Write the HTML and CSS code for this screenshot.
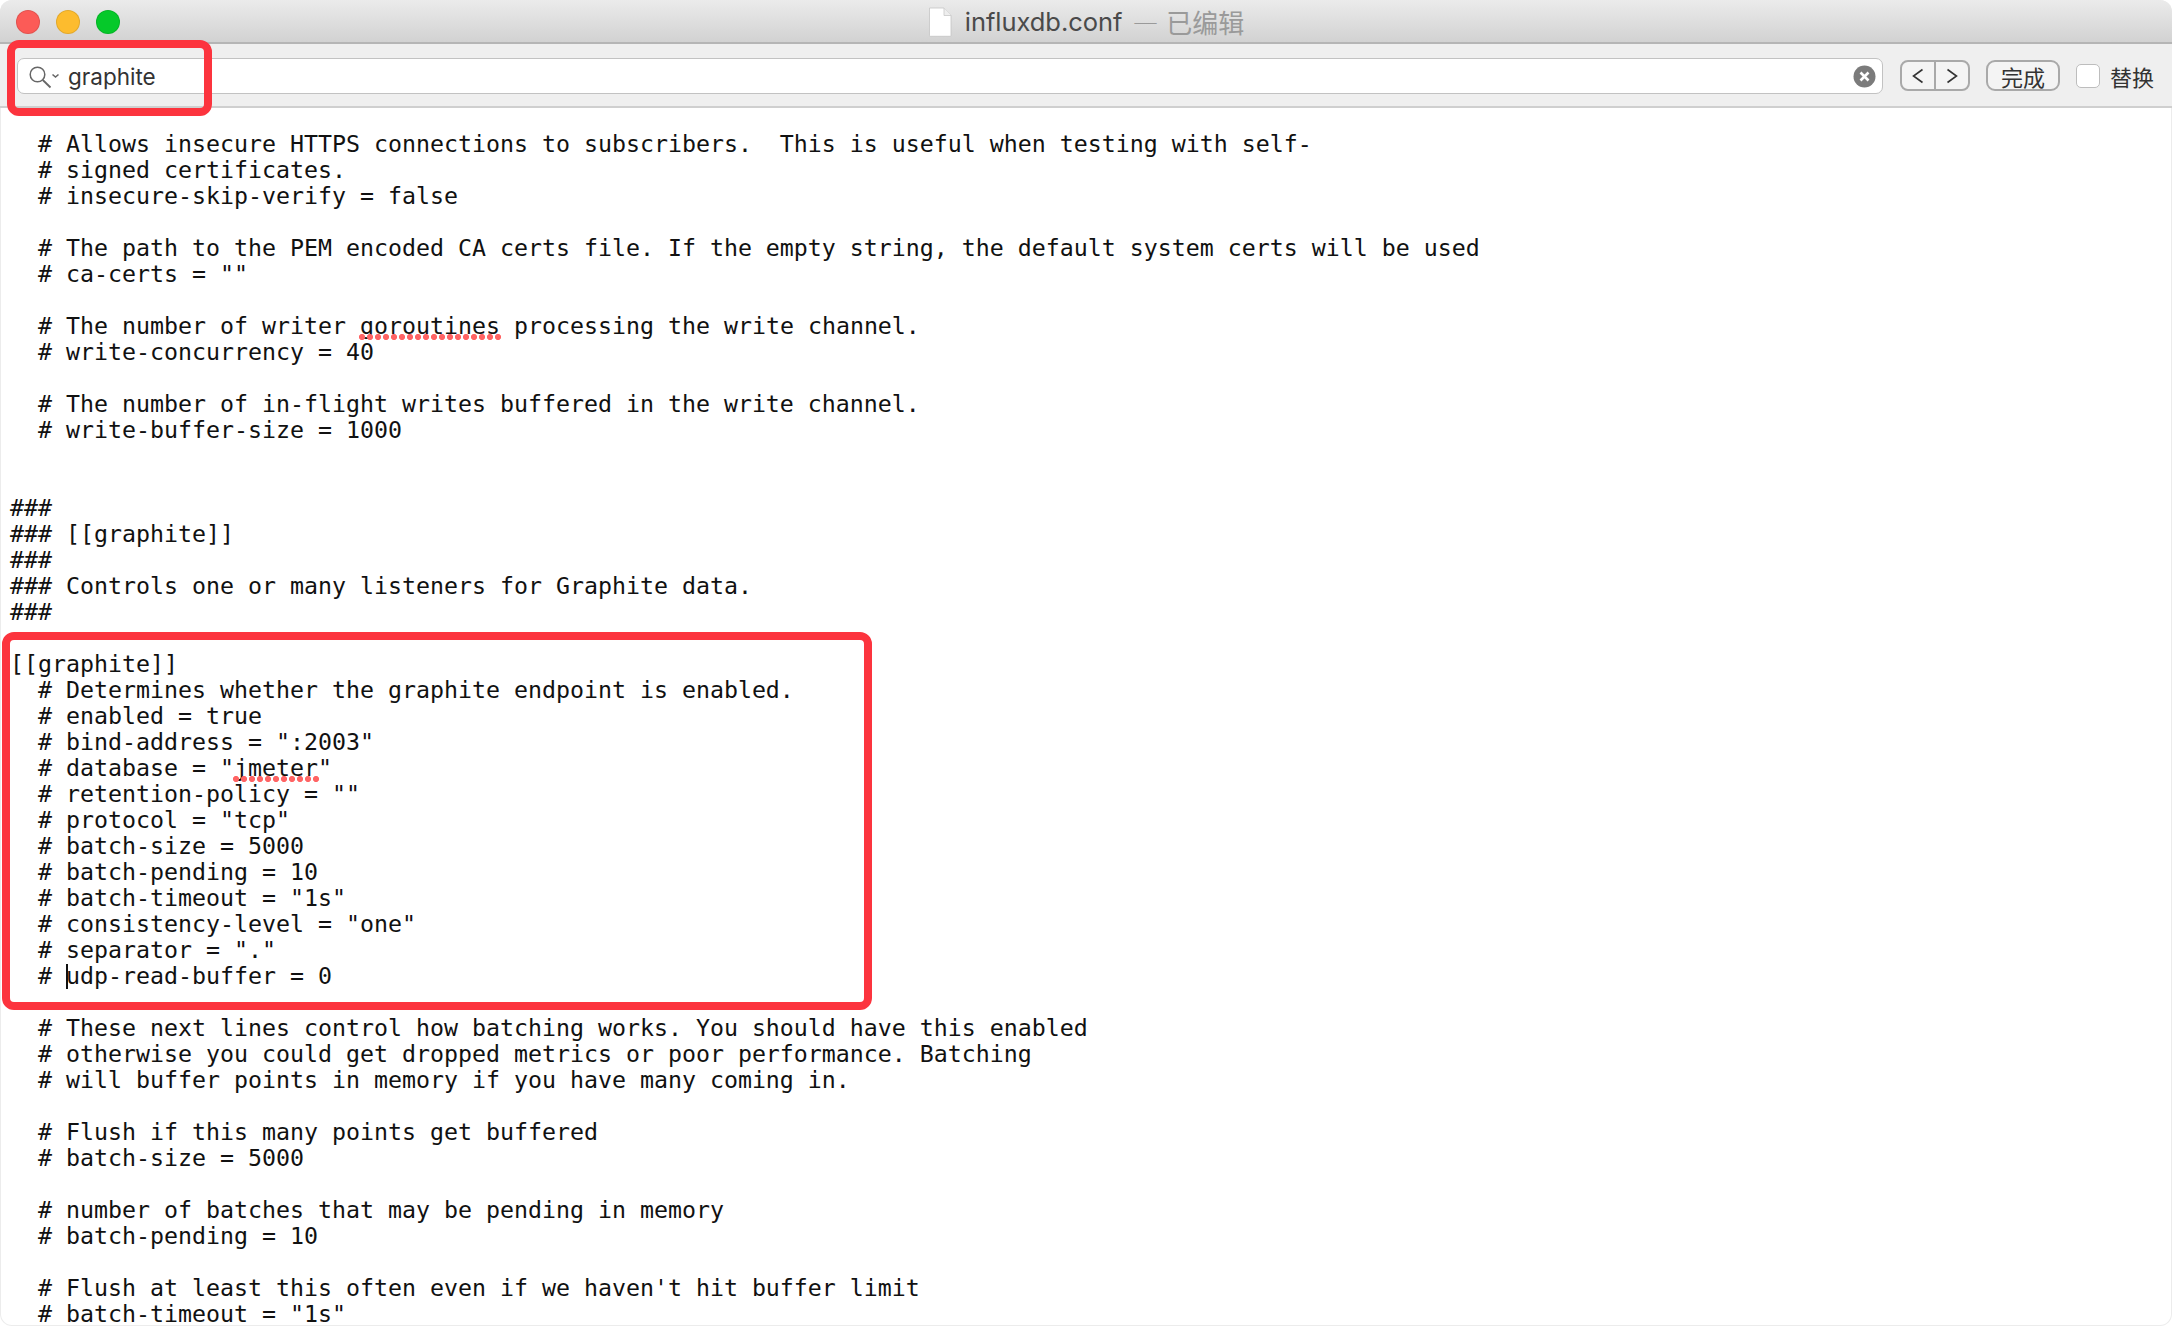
FILE: index.html
```html
<!DOCTYPE html>
<html lang="zh">
<head>
<meta charset="utf-8">
<title>influxdb.conf</title>
<link rel="stylesheet" href="styles.css">
</head>
<body>
<div class="window">
  <header class="titlebar">
    <div class="lights">
      <span class="light red"></span>
      <span class="light yellow"></span>
      <span class="light green"></span>
    </div>
    <div class="title">
      <svg class="doc" width="24" height="30" viewBox="0 0 24 30">
        <path d="M1.5 1H16L23 8.5V28.5a.8.8 0 0 1-.8.8H2.3a.8.8 0 0 1-.8-.8Z" fill="#fff" stroke="#c4c4c4" stroke-width=".8"/>
        <path d="M16 1V8.5H23" fill="#eee" stroke="#c8c8c8" stroke-width=".8"/>
      </svg>
      <span class="name">influxdb.conf</span>
      <span class="edited">— 已编辑</span>
    </div>
    <div></div>
  </header>
  <div class="findbar">
    <div class="search">
      <svg class="mag" width="32" height="26" viewBox="0 0 32 26">
        <circle cx="8.5" cy="11.5" r="7.3" fill="none" stroke="#666" stroke-width="1.5"/>
        <path d="M13.8 17L21.5 24.5" stroke="#666" stroke-width="1.8" fill="none"/>
        <path d="M23.5 11.5L26.5 14L29.5 11.5" stroke="#666" stroke-width="1.6" fill="none"/>
      </svg>
      <span class="query">graphite</span>
      <svg class="clear" width="23" height="23" viewBox="0 0 23 23">
        <circle cx="11.5" cy="11.5" r="11" fill="#7b7b7b"/>
        <path d="M7.5 7.5L15.5 15.5M15.5 7.5L7.5 15.5" stroke="#fff" stroke-width="2.6" fill="none"/>
      </svg>
    </div>
    <div class="stepper">
      <span class="step">
        <svg width="14" height="16" viewBox="0 0 14 16"><path d="M11.5 1.5L2.5 8L11.5 14.5" fill="none" stroke="#333" stroke-width="1.6"/></svg>
      </span>
      <span class="step">
        <svg width="14" height="16" viewBox="0 0 14 16"><path d="M2.5 1.5L11.5 8L2.5 14.5" fill="none" stroke="#333" stroke-width="1.6"/></svg>
      </span>
    </div>
    <div class="done">完成</div>
    <div class="check"></div>
    <div class="replace">替换</div>
  </div>
  <main class="editor">
<pre class="code">  # Allows insecure HTTPS connections to subscribers.  This is useful when testing with self-
  # signed certificates.
  # insecure-skip-verify = false

  # The path to the PEM encoded CA certs file. If the empty string, the default system certs will be used
  # ca-certs = ""

  # The number of writer <span class="misspelt">goroutines</span> processing the write channel.
  # write-concurrency = 40

  # The number of in-flight writes buffered in the write channel.
  # write-buffer-size = 1000


###
### [[graphite]]
###
### Controls one or many listeners for Graphite data.
###

[[graphite]]
  # Determines whether the graphite endpoint is enabled.
  # enabled = true
  # bind-address = ":2003"
  # database = "<span class="misspelt">jmeter</span>"
  # retention-policy = ""
  # protocol = "tcp"
  # batch-size = 5000
  # batch-pending = 10
  # batch-timeout = "1s"
  # consistency-level = "one"
  # separator = "."
  # <span class="caret"></span>udp-read-buffer = 0

  # These next lines control how batching works. You should have this enabled
  # otherwise you could get dropped metrics or poor performance. Batching
  # will buffer points in memory if you have many coming in.

  # Flush if this many points get buffered
  # batch-size = 5000

  # number of batches that may be pending in memory
  # batch-pending = 10

  # Flush at least this often even if we haven't hit buffer limit
  # batch-timeout = "1s"</pre>
  </main>
</div>
<div class="mark mark-search"></div>
<div class="mark mark-section"></div>
</body>
</html>
```
FILE: styles.css
```css
* { box-sizing: border-box; }
html, body { margin: 0; height: 100%; background: #fff; overflow: hidden; }
body { position: relative; }

.window {
  height: 1326px;
  display: flex;
  flex-direction: column;
  border-radius: 12px;
  overflow: hidden;
  background: #fff;
  box-shadow: inset 0 0 0 1px #ececec;
}

.titlebar {
  height: 44px;
  flex: none;
  display: grid;
  grid-template-columns: 1fr auto 1fr;
  align-items: center;
  background: linear-gradient(#ebebeb, #d2d2d2);
  border-bottom: 2px solid #b5b5b5;
}
.lights { display: flex; gap: 16px; padding-left: 16px; margin-top: 1px; }
.light { width: 24px; height: 24px; border-radius: 50%; border: 1px solid rgba(0,0,0,.1); }
.red { background: #fc5b57; }
.yellow { background: #fdbc2e; }
.green { background: #05c92a; }

.title {
  display: flex;
  align-items: center;
  font-family: Inter, "Noto Sans CJK SC", sans-serif;
  font-size: 25.5px;
  line-height: 30px;
  margin-top: 2px;
}
.doc { margin-right: 13px; }
.name { color: #4a4a4a; letter-spacing: -.05px; }
.edited { color: #9a9a9a; margin-left: 10px; font-family: "Noto Sans CJK SC", sans-serif; font-size: 26px; word-spacing: 2px; }

.findbar {
  height: 64px;
  flex: none;
  display: flex;
  align-items: center;
  padding: 2px 17px 0;
  background: #efefef;
  border-bottom: 2px solid #cfcfcf;
}
.search {
  width: 1866px;
  height: 36px;
  display: flex;
  align-items: center;
  padding: 0 6px 0 11px;
  background: #fff;
  border: 1px solid #c2c2c2;
  border-radius: 7px;
}
.mag { flex: none; }
.query {
  flex: 1;
  margin-left: 7px;
  font-family: Inter, "Liberation Sans", sans-serif;
  font-size: 22.5px;
  color: #333;
}
.clear { flex: none; }

.stepper {
  margin-left: 17px;
  width: 70px;
  height: 31px;
  margin-top: -1px;
  display: flex;
  border: 2px solid #a9a9a9;
  border-radius: 8px;
  background: #f4f4f4;
}
.step { flex: 1; display: flex; align-items: center; justify-content: center; }
.step + .step { border-left: 2px solid #a9a9a9; }

.done {
  margin-left: 16px;
  margin-top: -1px;
  width: 74px;
  height: 31px;
  border: 2px solid #a9a9a9;
  border-radius: 9px;
  background: #f4f4f4;
  display: flex;
  align-items: center;
  justify-content: center;
  font-family: "Noto Sans CJK SC", sans-serif;
  font-size: 22px;
  color: #333;
}
.check {
  margin-left: 16px;
  width: 24px;
  height: 24px;
  background: #fff;
  border: 1px solid #bdbdbd;
  border-radius: 5px;
}
.replace {
  margin-left: 10px;
  font-family: "Noto Sans CJK SC", sans-serif;
  font-size: 22px;
  color: #333;
}

.editor { flex: 1; padding: 23px 0 0 10px; overflow: hidden; }
.code {
  margin: 0;
  font-family: "DejaVu Sans Mono", monospace;
  font-size: 23.25px;
  line-height: 26px;
  color: #111;
}
.misspelt { position: relative; display: inline-block; line-height: 26px; }
.misspelt::after {
  content: "";
  position: absolute;
  left: -1px;
  right: -3px;
  bottom: -1px;
  height: 6px;
  background: radial-gradient(circle at 3px 3px, #ff6464 2.8px, transparent 3.2px) 0 0 / 8px 6px repeat-x;
}
.caret {
  position: relative;
  display: inline-block;
  width: 0;
  height: 26px;
  vertical-align: top;
}
.caret::before {
  content: "";
  position: absolute;
  left: 0;
  top: 1px;
  width: 2px;
  height: 25px;
  background: #111;
}

.mark {
  position: absolute;
  border: 8px solid #fc343e;
  border-radius: 12px;
  pointer-events: none;
}
.mark-search { left: 7px; top: 40px; width: 205px; height: 76px; }
.mark-section { left: 2px; top: 632px; width: 870px; height: 378px; }
```
